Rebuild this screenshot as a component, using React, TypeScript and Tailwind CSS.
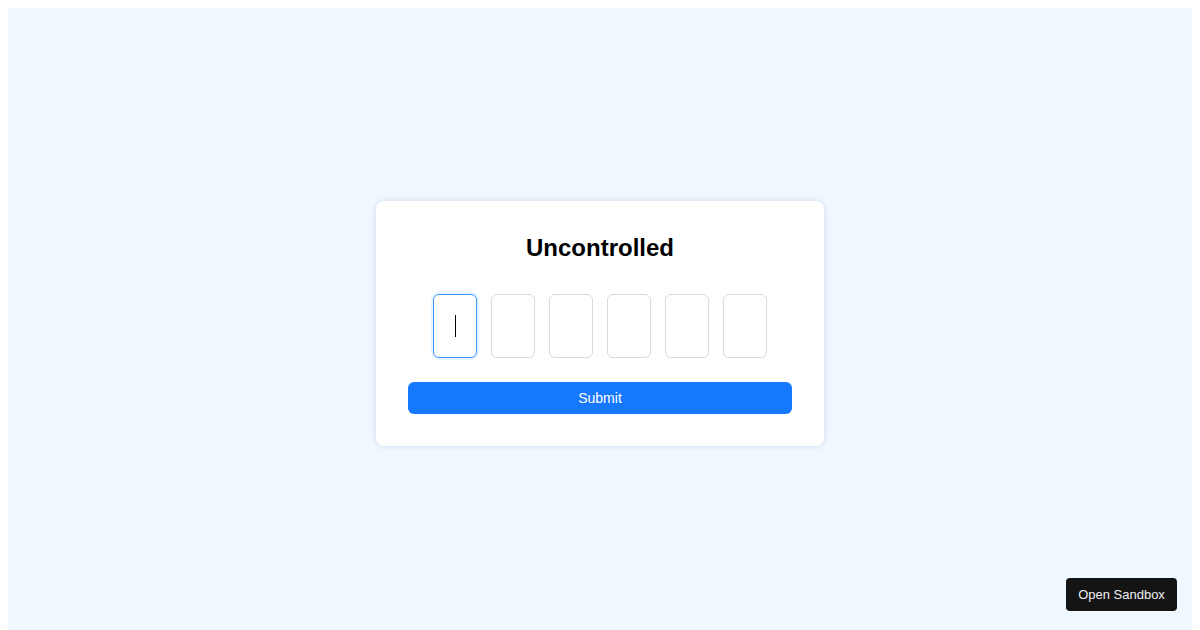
const slots = [0, 1, 2, 3, 4, 5]

export default function App() {
  return (
    <div className="min-h-screen bg-white p-2 font-['Liberation_Sans',Arial,sans-serif]">
      <div className="flex h-[640px] items-start justify-center bg-[#f0f8ff] pt-[193px]">
        <div className="flex w-[448px] flex-col items-center rounded-lg bg-white px-8 pb-8 pt-8 shadow-[0_0_6px_rgba(0,60,140,0.15)]">
          <h2 className="h-[30px] text-[24px] font-bold leading-[30px] text-black">Uncontrolled</h2>

          <div className="mt-[31px] flex gap-[14px]">
            {slots.map((i) => (
              <div
                key={i}
                className={
                  i === 0
                    ? 'flex h-[64px] w-[44px] items-center justify-center rounded-md border border-[#4096ff] bg-white shadow-[0_0_0_2px_rgba(5,145,255,0.1)]'
                    : 'flex h-[64px] w-[44px] items-center justify-center rounded-md border border-[#d9d9d9] bg-white'
                }
              >
                {i === 0 && <span className="h-[22px] w-px bg-black" />}
              </div>
            ))}
          </div>

          <button className="mt-[24px] h-8 w-full rounded-md bg-[#1677ff] text-[14px] text-white">
            Submit
          </button>
        </div>
      </div>

      <button className="fixed bottom-[19px] right-[23px] h-[33px] w-[111px] rounded bg-[#141414] text-[13px] text-[#f0f0f0]">
        Open Sandbox
      </button>
    </div>
  )
}
